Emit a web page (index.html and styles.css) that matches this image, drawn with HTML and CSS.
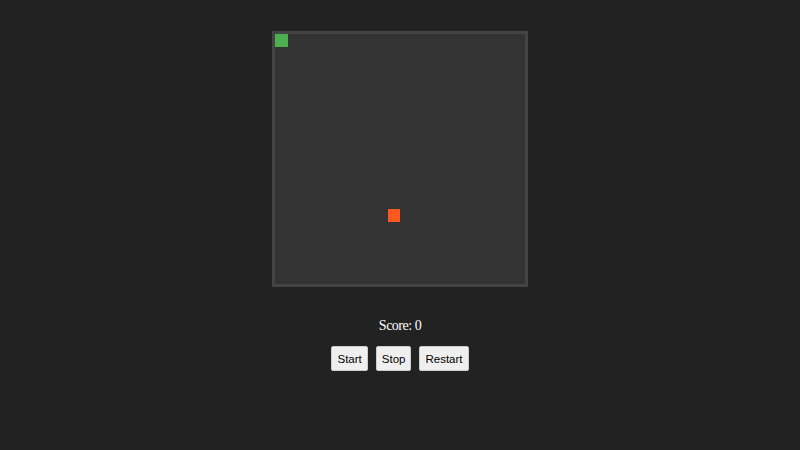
FILE: index.html
```html
<!DOCTYPE html>
<html>
<head>
<meta charset="utf-8">
<link rel="stylesheet" href="styles.css">
</head>
<body>
<main class="game">
  <div class="board">
    <div class="cell snake" style="grid-column: 1; grid-row: 1;"></div>
    <div class="cell food" style="grid-column: 10; grid-row: 15;"></div>
  </div>
  <div class="score">Score: 0</div>
  <div class="controls">
    <button class="btn">Start</button>
    <button class="btn">Stop</button>
    <button class="btn">Restart</button>
  </div>
</main>
</body>
</html>
```
FILE: styles.css
```css
html, body {
  margin: 0;
  padding: 0;
  background: #222222;
}
.game {
  display: flex;
  flex-direction: column;
  align-items: center;
  padding-top: 31px;
}
.board {
  width: 250px;
  height: 250px;
  border: 3px solid #444444;
  background: #333333;
  display: grid;
  grid-template-columns: repeat(20, 12.5px);
  grid-template-rows: repeat(20, 12.5px);
}
.cell { width: 100%; height: 100%; }
.snake { background: #4caf50; }
.food { background: #ff5722; }
.score {
  margin-top: 30px;
  font-family: "Liberation Serif", serif;
  font-size: 14px;
  letter-spacing: -0.5px;
  line-height: 18px;
  color: #ffffff;
}
.controls {
  margin-top: 11px;
  display: flex;
  gap: 8px;
}
.btn {
  font-family: "Liberation Sans", Arial, sans-serif;
  font-size: 11.5px;
  height: 25px;
  padding: 0 5px;
  background: #efefef;
  color: #000;
  border: 1px solid #cccccc;
  border-radius: 2px;
}
```
